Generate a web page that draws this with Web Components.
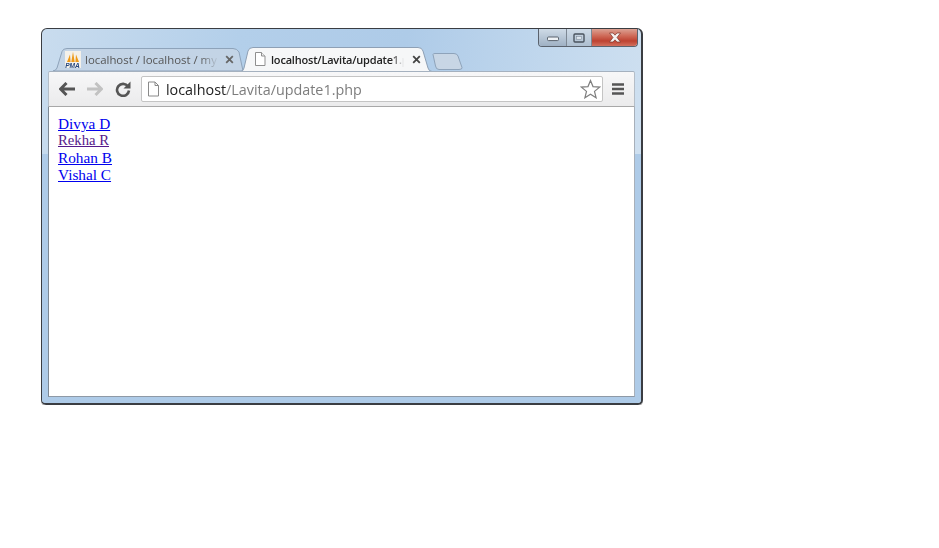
<!DOCTYPE html>
<html>
<head>
<meta charset="utf-8">
<title>update1</title>
<style>
html,body{margin:0;padding:0;background:#fff;}
</style>
</head>
<body>
<browser-window>
    <tab-strip slot="tabs">
        <browser-tab title-text="localhost / localhost / my" icon="pma"></browser-tab>
        <browser-tab title-text="localhost/Lavita/update1.p" icon="page" active></browser-tab>
    </tab-strip>
    <nav-toolbar slot="toolbar" host-part="localhost" path-part="/Lavita/update1.php"></nav-toolbar>
    <link-list>
        <a href="#divya">Divya D</a>
        <a href="#rekha" class="seen">Rekha R</a>
        <a href="#rohan">Rohan B</a>
        <a href="#vishal">Vishal C</a>
    </link-list>
</browser-window>

<script>
class BrowserWindow extends HTMLElement {
    constructor(){
        super();
        this.shadowDOM = this.attachShadow({mode: 'open'});
        this.shadowDOM.innerHTML = `
        <style>
            *{margin:0;padding:0;box-sizing:border-box;}
            :host{
                display:block;
                width:602px;
                height:377px;
                margin:28px 0 0 41px;
            }
            .frame{
                position:relative;
                width:100%;
                height:100%;
                display:flex;
                flex-direction:column;
                border:1px solid #3a3d42;
                border-bottom-width:2px;
                border-right-width:2px;
                border-radius:6px 6px 5px 5px;
                background:linear-gradient(100deg,#c9dcee 0%,#b3cfea 30%,#aecbe8 55%,#c8dcef 85%,#d4e3f1 100%);
                box-shadow:0 1px 0 #a3a3a3;
                filter:blur(.3px);
            }
            .edge{
                position:absolute;
                left:0;right:0;top:125px;bottom:0;
                background:#aecbe8;
                border-radius:0 0 4px 4px;
            }
            .controls{
                position:absolute;
                top:0;
                right:3px;
                z-index:2;
            }
            .tabs{height:42px;padding:19px 0 0 11px;position:relative;z-index:1;}
            .body{
                flex:1;
                margin:0 6px 6px 6px;
                display:flex;
                flex-direction:column;
                position:relative;
                z-index:1;
            }
            .page{
                flex:1;
                background:#fff;
                border-bottom:1px solid #8e99a6;
                border-left:1px solid #7d8894;
                border-right:1px solid #a8b0ba;
            }
        </style>
        <div class="frame">
            <div class="edge"></div>
            <window-controls class="controls"></window-controls>
            <div class="tabs"><slot name="tabs"></slot></div>
            <div class="body">
                <slot name="toolbar"></slot>
                <div class="page"><slot></slot></div>
            </div>
        </div>
        `;
    }
}

class WindowControls extends HTMLElement {
    constructor(){
        super();
        this.attachShadow({mode: 'open'}).innerHTML = `
        <style>
            *{margin:0;padding:0;box-sizing:border-box;}
            :host{display:block;}
            .box{
                display:flex;
                width:100px;
                height:18px;
                border:1px solid #5a626d;
                border-top:none;
                border-radius:0 0 4px 4px;
                overflow:hidden;
            }
            .btn{display:flex;align-items:center;justify-content:center;}
            .min{width:28px;background:linear-gradient(#cfdbe7,#9fb1c4);border-right:1px solid #7d8894;}
            .max{width:25px;background:linear-gradient(#cfdbe7,#aebfd0);border-right:1px solid #7d8894;}
            .close{flex:1;background:linear-gradient(#dba193 0%,#cf6a58 40%,#bd4231 70%,#d2705e 100%);}
            .min svg{margin-top:3px;}
        </style>
        <div class="box">
            <div class="btn min"><svg width="14" height="6" viewBox="0 0 14 6"><rect x="1.5" y="1" width="11" height="3.6" rx="1" fill="#eef2f6" stroke="#5a636e"/></svg></div>
            <div class="btn max"><svg width="12" height="10" viewBox="0 0 12 10"><rect x="1" y="1" width="10" height="8" rx="1" fill="none" stroke="#4a535e" stroke-width="1.4"/><rect x="3.4" y="3.6" width="5.2" height="2.6" fill="#dfe7ef" stroke="#77818d" stroke-width=".5"/></svg></div>
            <div class="btn close"><svg width="16" height="11" viewBox="0 0 16 11"><path d="M2.5 1 H6 L8 3.2 L10 1 H13.5 L10 5.5 L13.5 10 H10 L8 7.8 L6 10 H2.5 L6 5.5 Z" fill="#f5f3f2" stroke="#7b352a" stroke-width=".7"/></svg></div>
        </div>
        `;
    }
}

class TabStrip extends HTMLElement {
    constructor(){
        super();
        this.attachShadow({mode: 'open'}).innerHTML = `
        <style>
            :host{display:flex;align-items:flex-end;height:23px;}
            .new{display:block;margin:0 0 1px 0;position:relative;z-index:0;}
        </style>
        <slot></slot>
        <svg class="new" width="31" height="17" viewBox="0 0 31 17">
            <path d="M1 1.5 Q1 .5 3 .5 H22 Q25 .5 26 3 L30 14.5 Q30.5 16.5 27 16.5 H7 Q4 16.5 3.5 13 Z" fill="#c8d6e5" stroke="#8ea3ba"/>
        </svg>
        `;
    }
}

class BrowserTab extends HTMLElement {
    constructor(){
        super();
        this.shadowDOM = this.attachShadow({mode: 'open'});
    }
    connectedCallback(){
        this.render();
    }
    render(){
        const active = this.hasAttribute('active');
        const icon = this.getAttribute('icon') === 'pma'
            ? `<svg class="ico" width="16" height="17" viewBox="0 0 16 17">
                <rect x="0" y="0" width="16" height="17" fill="#f4f1ea"/>
                <path d="M2 11 L5 3.5 L5.6 11Z M6.3 11 L8 .8 L9.7 11Z M10.4 11 L11 3.5 L14 11Z" fill="#ee9a18"/>
                <text x=".2" y="16.6" font-family="Liberation Sans,sans-serif" font-size="6.6" font-weight="700" font-style="italic" fill="#24477f">PMA</text>
               </svg>`
            : `<svg class="ico" width="14" height="16" viewBox="0 0 14 16">
                <path d="M2.5 1.5 H8.5 L12 5 V14.5 H2.5 Z" fill="#fff" stroke="#8f8f8f"/>
                <path d="M8.5 1.5 V5 H12" fill="#eee" stroke="#8f8f8f"/>
               </svg>`;
        this.shadowDOM.innerHTML = `
        <style>
            *{margin:0;padding:0;box-sizing:border-box;}
            :host{
                display:block;
                position:relative;
                flex:none;
                width:${active ? 192 : 190}px;
                height:${active ? 25 : 23}px;
                ${active ? 'margin:0 0 -1px -3px;' : ''}
                z-index:${active ? 2 : 1};
            }
            .shape{position:absolute;left:0;top:0;}
            .row{
                position:relative;
                display:flex;
                align-items:center;
                height:100%;
                padding:${active ? '0 0 1px 13px' : '0 0 0 12px'};
                font-family:"Open Sans","Noto Sans",sans-serif;
                font-size:${active ? '11px' : '11.4px'};
                letter-spacing:${active ? '-0.2px' : '0'};
                font-weight:${active ? 600 : 400};
                color:${active ? '#222' : '#555'};
            }
            .ico{flex:none;margin-right:4px;}
            .label{
                flex:none;
                width:${active ? '133px' : '134px'};
                white-space:nowrap;
                -webkit-mask-image:linear-gradient(90deg,#000 ${active ? '90%' : '86%'},transparent 100%);
                mask-image:linear-gradient(90deg,#000 ${active ? '90%' : '86%'},transparent 100%);
            }
            .x{
                flex:none;
                width:9px;height:9px;
                margin-left:${active ? '8px' : '6px'};
            }
        </style>
        ${active
            ? `<svg class="shape" width="192" height="25" viewBox="0 0 192 25"><path d="M0 24.5 H1 Q3 24.5 4 21 L8 4 Q9 .5 13 .5 H178 Q182 .5 183 4 L188 21 Q189 24.5 192 24.5 V25 H0Z" fill="#f6f7f8" stroke="#8ea0b5"/></svg>`
            : `<svg class="shape" width="190" height="23" viewBox="0 0 190 23"><path d="M0 23 Q3 22.5 4 20 L9 3.5 Q10 .5 14 .5 H180 Q184 .5 186 4 L190 23 Z" fill="#c3d4e6" stroke="#8ea3ba"/></svg>`}
        <div class="row">
            ${icon}
            <span class="label">${this.getAttribute('title-text')}</span>
            <svg class="x" viewBox="0 0 9 9"><path d="M1.2 1.2 L7.8 7.8 M7.8 1.2 L1.2 7.8" stroke="${active ? '#444' : '#666'}" stroke-width="1.8"/></svg>
        </div>
        `;
    }
}

class NavToolbar extends HTMLElement {
    constructor(){
        super();
        this.shadowDOM = this.attachShadow({mode: 'open'});
    }
    connectedCallback(){
        this.shadowDOM.innerHTML = `
        <style>
            *{margin:0;padding:0;box-sizing:border-box;}
            :host{
                display:flex;
                align-items:center;
                height:34px;
                flex:none;
                background:linear-gradient(#f7f7f8,#ebebec);
                border-top:1px solid #a5b1bf;
                border-bottom:1px solid #a8a8a8;
                padding:0 9px 0 10px;
                border-left:1px solid #b5bec8;
                border-right:1px solid #b5bec8;
                border-radius:2px 2px 0 0;
            }
            svg{display:block;flex:none;}
            .back{margin-right:10px;}
            .fwd{margin-right:12px;}
            .reload{margin-right:10px;}
            .omni{
                flex:1;
                display:flex;
                align-items:center;
                height:26px;
                background:#fff;
                border:1px solid #c4c4c4;
                border-radius:2px;
                padding:0 1px 0 5px;
                font-family:"Open Sans","Noto Sans",sans-serif;
                font-size:14.35px;
            }
            .page{margin-right:6px;}
            .url{flex:1;white-space:nowrap;color:#222;}
            .url span{color:#7d7d7d;}
            .menu{margin-left:8px;}
        </style>
        <svg class="back" width="17" height="14" viewBox="0 0 17 14"><path d="M7.5 1 L1.5 7 L7.5 13 M2 7 H16" fill="none" stroke="#555" stroke-width="3"/></svg>
        <svg class="fwd" width="17" height="14" viewBox="0 0 17 14"><path d="M9.5 1 L15.5 7 L9.5 13 M15 7 H1" fill="none" stroke="#c2c2c2" stroke-width="3"/></svg>
        <svg class="reload" width="16" height="16" viewBox="0 0 16 16"><path d="M13 5.5 A6 6 0 1 0 14 9.5" fill="none" stroke="#555" stroke-width="2.6"/><path d="M15.5 .5 V7.5 H8.5 Z" fill="#555"/></svg>
        <div class="omni">
            <svg class="page" width="13" height="16" viewBox="0 0 13 16"><path d="M1.5 1 H8 L11.5 4.5 V15 H1.5 Z" fill="#fff" stroke="#8a8a8a"/><path d="M8 1 V4.5 H11.5" fill="none" stroke="#8a8a8a"/></svg>
            <div class="url">${this.getAttribute('host-part')}<span>${this.getAttribute('path-part')}</span></div>
            <svg width="21" height="20" viewBox="0 0 21 20"><path d="M10.5 1.5 L13 7.6 L19.6 8.1 L14.5 12.4 L16.1 18.8 L10.5 15.3 L4.9 18.8 L6.5 12.4 L1.4 8.1 L8 7.6 Z" fill="#fff" stroke="#7f7f7f" stroke-width="1.2"/></svg>
        </div>
        <svg class="menu" width="14" height="14" viewBox="0 0 14 14"><path d="M1 2.5 H13 M1 7 H13 M1 11.5 H13" stroke="#555" stroke-width="2.6"/></svg>
        `;
    }
}

class LinkList extends HTMLElement {
    constructor(){
        super();
        this.attachShadow({mode: 'open'}).innerHTML = `
        <style>
            :host{
                display:flex;
                flex-direction:column;
                align-items:flex-start;
                padding:8px 0 0 9px;
                font-family:"Liberation Serif",serif;
                font-size:15.3px;
                line-height:17px;
            }
            ::slotted(a){color:#0000ee;text-decoration:underline;}
            ::slotted(a.seen){color:#551a8b;font-size:14.7px;}
        </style>
        <slot></slot>
        `;
    }
}

customElements.define('browser-window',BrowserWindow);
customElements.define('window-controls',WindowControls);
customElements.define('tab-strip',TabStrip);
customElements.define('browser-tab',BrowserTab);
customElements.define('nav-toolbar',NavToolbar);
customElements.define('link-list',LinkList);
</script>
</body>
</html>
